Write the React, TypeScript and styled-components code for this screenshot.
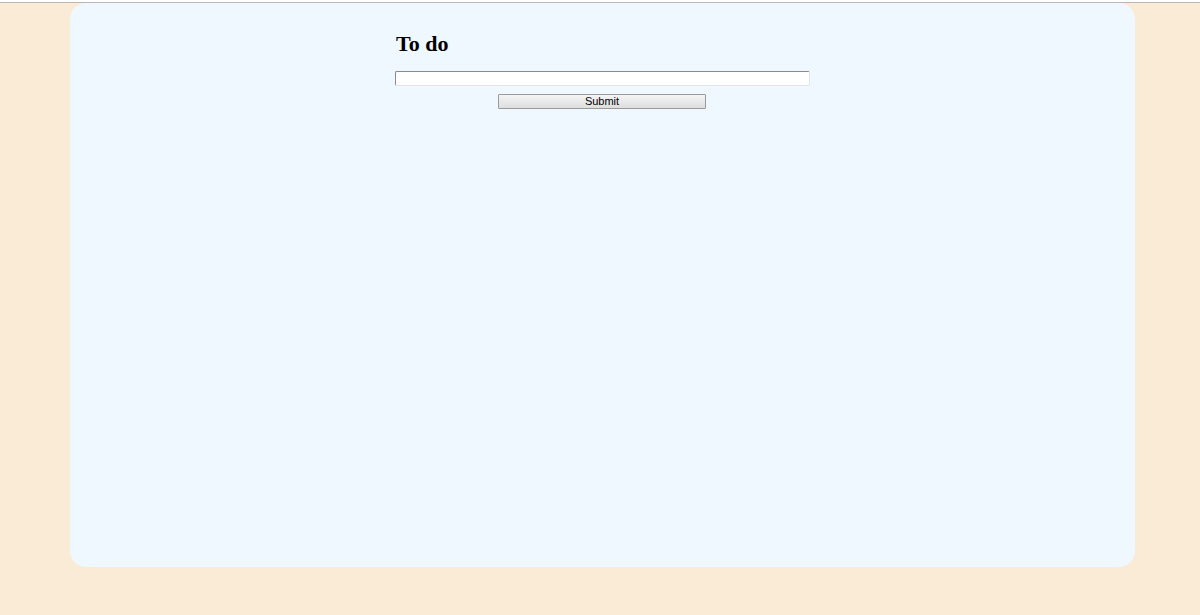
import React from 'react';
import styled, {createGlobalStyle} from "styled-components";

const GlobalStyle = createGlobalStyle`
  html, body {
    margin: 0;
    padding: 0;
    height: 100%;
  }
  body {
    background: #faebd7;
    border-top: 2px solid #ffffff;
    box-sizing: border-box;
  }
  #root {
    height: 100%;
  }
`;

const Page = styled.div`
  height: 100%;
  box-sizing: border-box;
  border-top: 1px solid #b9b9b9;
  padding: 0 65px 0 70px;
`;

const Panel = styled.main`
  height: 564px;
  box-sizing: border-box;
  background: #eff7ff;
  border-radius: 16px;
  padding-top: 28px;
`;

const Column = styled.div`
  width: 415px;
  margin: 0 auto;
  display: flex;
  flex-direction: column;
  align-items: center;
`;

const Title = styled.h2`
  align-self: flex-start;
  margin: 0 0 14px 1px;
  font-family: "Liberation Serif", "Times New Roman", serif;
  font-size: 22px;
  font-weight: bold;
  color: #000;
`;

const TaskInput = styled.input`
  width: 100%;
  height: 15px;
  box-sizing: border-box;
  margin: 0 0 8px;
  padding: 0 3px;
  background: #fff;
  border: 1px solid;
  border-color: #8a8a8a #e3e3e3 #e3e3e3 #8a8a8a;
  border-radius: 2px;
  font-size: 11px;
`;

const SubmitButton = styled.button`
  width: 208px;
  height: 15px;
  box-sizing: border-box;
  padding: 0;
  margin-right: 1px;
  background: linear-gradient(#f4f4f4, #dedede);
  border: 1px solid #9a9a9a;
  border-radius: 1px;
  font-family: "Liberation Sans", Arial, sans-serif;
  font-size: 11px;
  line-height: 13px;
  color: #000;
`;

export default function App() {
    return <>
        <GlobalStyle/>
        <Page>
            <Panel>
                <Column>
                    <Title>To do</Title>
                    <TaskInput type="text"/>
                    <SubmitButton>Submit</SubmitButton>
                </Column>
            </Panel>
        </Page>
    </>;
}
